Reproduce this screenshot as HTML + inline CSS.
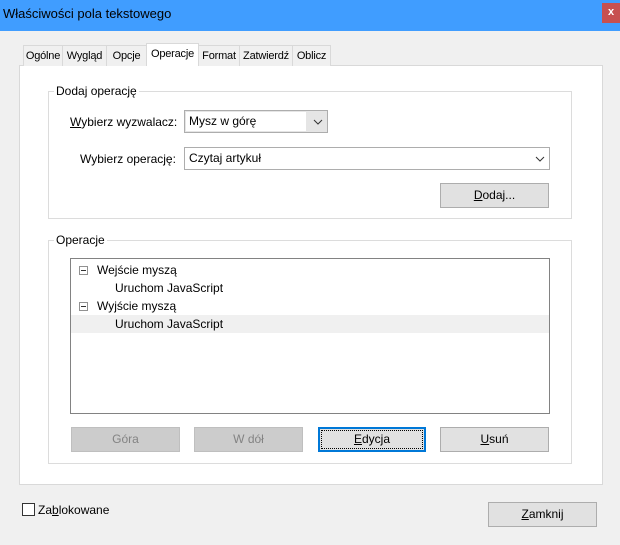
<!DOCTYPE html><html><head><meta charset="utf-8"><style>
*{box-sizing:border-box;margin:0;padding:0}
body{width:620px;height:545px;background:#f0f0f0;font:12px "Liberation Sans",sans-serif;color:#000;position:relative;overflow:hidden}
.a{position:absolute}
.title{left:0;top:0;width:620px;height:31px;background:#409dff;font-size:13px;line-height:27px;padding-left:3px}
.close{left:602px;top:3px;width:18px;height:20px;background:#c75050;color:#fff;font-weight:bold;text-align:center;line-height:19px;font-size:11px}
.tab{top:45px;height:21px;border:1px solid #d9d9d9;border-bottom:none;background:#f0f0f0;text-align:center;line-height:20px;font-size:11px;letter-spacing:-0.2px;white-space:nowrap}
.panel{left:19px;top:65px;width:584px;height:420px;background:#fff;border:1px solid #d9d9d9}
.grp{border:1px solid #dcdcdc}
.leg{background:#fff;padding:0 2px;line-height:14px}
.cb{border:1px solid #adadad;background:#e5e5e5;height:23px}
.cb .in{position:absolute;left:1px;top:1px;bottom:1px;background:#fff;padding-left:3px;line-height:19px}
.btn{height:25px;border:1px solid #adadad;background:#e1e1e1;text-align:center;line-height:23px}
.dis{background:#ccc;border-color:#bfbfbf;color:#838383}
u{text-decoration:underline}
.tree{left:70px;top:258px;width:480px;height:156px;border:1px solid #828282;background:#fff}
.row{position:absolute;left:0;width:478px;height:18px;line-height:18px}
.pm{position:absolute;left:8px;top:5px;width:9px;height:9px;border:1px solid #919191}
.pm:after{content:"";position:absolute;left:1px;top:3px;width:5px;height:1px;background:#333}
</style></head><body>
<div class="a title">Właściwości pola tekstowego</div>
<div class="a close">x</div>
<div class="a panel"></div>
<div class="a tab" style="left:23px;width:40px">Ogólne</div>
<div class="a tab" style="left:62px;width:45px">Wygląd</div>
<div class="a tab" style="left:106px;width:41px">Opcje</div>
<div class="a tab" style="left:146px;width:53px;top:43px;height:23px;background:#fff;line-height:21px">Operacje</div>
<div class="a tab" style="left:198px;width:42px">Format</div>
<div class="a tab" style="left:239px;width:54px">Zatwierdź</div>
<div class="a tab" style="left:292px;width:39px">Oblicz</div>

<div class="a grp" style="left:48px;top:91px;width:524px;height:128px"></div>
<div class="a leg" style="left:54px;top:84px">Dodaj operację</div>
<div class="a" style="left:70px;top:115px"><u>W</u>ybierz wyzwalacz:</div>
<div class="a cb" style="left:184px;top:110px;width:144px"><div class="in" style="width:120px">Mysz w górę</div>
<svg class="a" style="left:128px;top:8px" width="10" height="6"><path d="M1 1 L5 5 L9 1" stroke="#333" fill="none"/></svg></div>
<div class="a" style="left:80px;top:152px">Wybierz operację:</div>
<div class="a cb" style="left:184px;top:147px;width:366px;background:#fff"><div class="in">Czytaj artykuł</div>
<svg class="a" style="left:350px;top:8px" width="10" height="6"><path d="M1 1 L5 5 L9 1" stroke="#333" fill="none"/></svg></div>
<div class="a btn" style="left:440px;top:183px;width:109px"><u>D</u>odaj...</div>

<div class="a grp" style="left:48px;top:240px;width:524px;height:224px"></div>
<div class="a leg" style="left:54px;top:233px">Operacje</div>
<div class="a tree">
<div class="row" style="top:2px"><div class="pm"></div><span style="position:absolute;left:26px">Wejście myszą</span></div>
<div class="row" style="top:20px"><span style="position:absolute;left:44px">Uruchom JavaScript</span></div>
<div class="row" style="top:38px"><div class="pm"></div><span style="position:absolute;left:26px">Wyjście myszą</span></div>
<div class="row" style="top:56px;background:#f0f0f0"><span style="position:absolute;left:44px">Uruchom JavaScript</span></div>
</div>
<div class="a btn dis" style="left:71px;top:427px;width:109px">Góra</div>
<div class="a btn dis" style="left:194px;top:427px;width:109px">W dół</div>
<div class="a btn" style="left:318px;top:427px;width:108px;border:2px solid #0078d7;line-height:21px"><div class="a" style="left:1px;top:1px;right:1px;bottom:1px;border:1px dotted #000"></div><u>E</u>dycja</div>
<div class="a btn" style="left:440px;top:427px;width:109px"><u>U</u>suń</div>

<div class="a" style="left:22px;top:503px;width:13px;height:13px;border:1px solid #333;background:#fff"></div>
<div class="a" style="left:38px;top:503px">Za<u>b</u>lokowane</div>
<div class="a btn" style="left:488px;top:502px;width:109px"><u>Z</u>amknij</div>
</body></html>
